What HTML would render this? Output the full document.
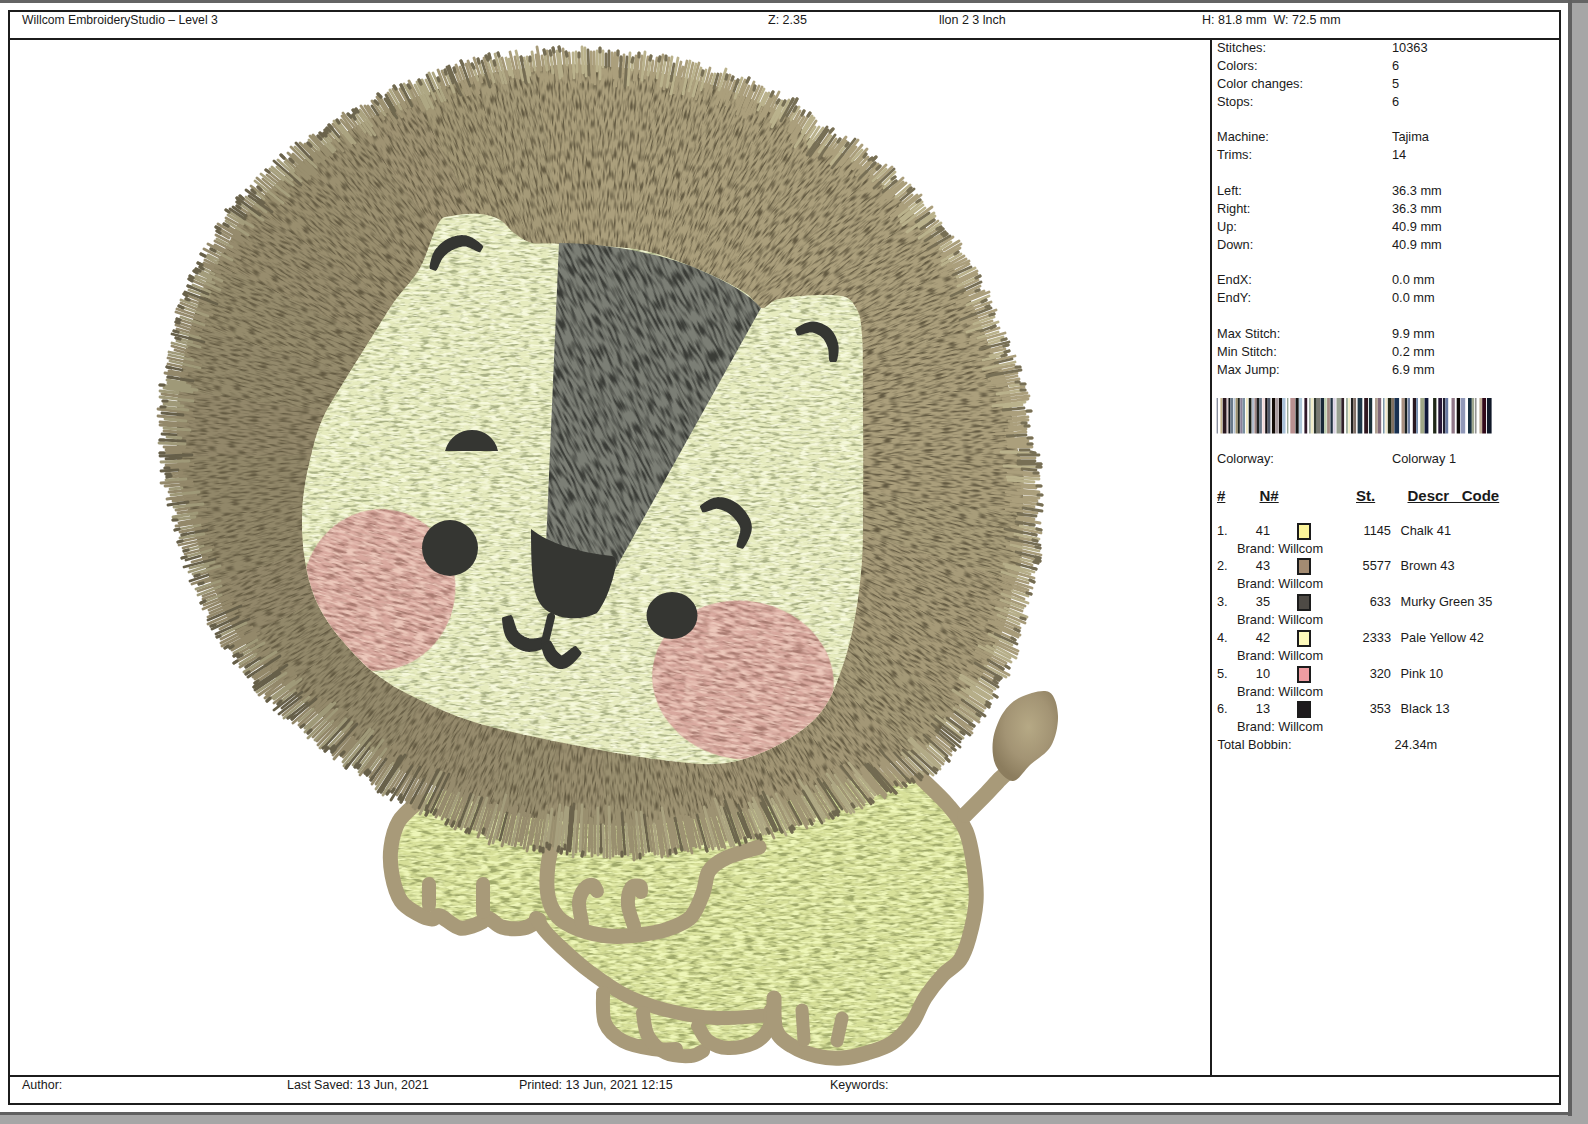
<!DOCTYPE html>
<html><head><meta charset="utf-8">
<style>
html,body{margin:0;padding:0;}
body{width:1588px;height:1124px;position:relative;overflow:hidden;background:#a6a6a6;font-family:"Liberation Sans",sans-serif;color:#1a1a1a;}
.t{position:absolute;white-space:pre;font-size:12.5px;line-height:1;}
.page{position:absolute;left:0;top:3px;width:1568px;height:1109px;background:#fff;}
.ln{position:absolute;background:#1c1c1c;}
.hd{position:absolute;font-weight:bold;font-size:15px;text-decoration:underline;white-space:pre;line-height:1;}
.sw{position:absolute;width:10px;height:13px;border:2px solid #1c1c1c;}
</style></head><body>
<div style="position:absolute;left:0;top:0;width:1588px;height:3px;background:#646464"></div>
<div class="page"></div>
<div style="position:absolute;left:1568px;top:0;width:4px;height:1116px;background:#606060"></div>
<div style="position:absolute;left:0;top:1112px;width:1572px;height:3px;background:#606060"></div>

<!-- frame -->
<div class="ln" style="left:9px;top:10px;width:1552px;height:2px"></div>
<div class="ln" style="left:9px;top:38px;width:1552px;height:2px"></div>
<div class="ln" style="left:9px;top:1075px;width:1552px;height:2px"></div>
<div class="ln" style="left:9px;top:1103px;width:1552px;height:2px"></div>
<div class="ln" style="left:8px;top:10px;width:2px;height:1095px"></div>
<div class="ln" style="left:1559px;top:10px;width:2px;height:1095px"></div>
<div class="ln" style="left:1210px;top:38px;width:2px;height:1039px"></div>

<!-- header -->
<div class="t" style="left:22px;top:13.8px;font-size:12.2px">Willcom EmbroideryStudio – Level 3</div>
<div class="t" style="left:768px;top:13.8px">Z: 2.35</div>
<div class="t" style="left:939px;top:13.8px">llon 2 3 lnch</div>
<div class="t" style="left:1202px;top:13.8px">H: 81.8 mm  W: 72.5 mm</div>

<!-- footer -->
<div class="t" style="left:22px;top:1078.8px">Author:</div>
<div class="t" style="left:287px;top:1078.8px">Last Saved: 13 Jun, 2021</div>
<div class="t" style="left:519px;top:1078.8px">Printed: 13 Jun, 2021 12:15</div>
<div class="t" style="left:830px;top:1078.8px">Keywords:</div>

<!-- right panel -->
<div class="t" style="left:1217.0px;top:41.9px;font-size:12.8px">Stitches:</div>
<div class="t" style="left:1392.0px;top:41.9px;font-size:12.8px">10363</div>
<div class="t" style="left:1217.0px;top:59.7px;font-size:12.8px">Colors:</div>
<div class="t" style="left:1392.0px;top:59.7px;font-size:12.8px">6</div>
<div class="t" style="left:1217.0px;top:77.6px;font-size:12.8px">Color changes:</div>
<div class="t" style="left:1392.0px;top:77.6px;font-size:12.8px">5</div>
<div class="t" style="left:1217.0px;top:95.5px;font-size:12.8px">Stops:</div>
<div class="t" style="left:1392.0px;top:95.5px;font-size:12.8px">6</div>
<div class="t" style="left:1217.0px;top:131.3px;font-size:12.8px">Machine:</div>
<div class="t" style="left:1392.0px;top:131.3px;font-size:12.8px">Tajima</div>
<div class="t" style="left:1217.0px;top:149.1px;font-size:12.8px">Trims:</div>
<div class="t" style="left:1392.0px;top:149.1px;font-size:12.8px">14</div>
<div class="t" style="left:1217.0px;top:184.9px;font-size:12.8px">Left:</div>
<div class="t" style="left:1392.0px;top:184.9px;font-size:12.8px">36.3 mm</div>
<div class="t" style="left:1217.0px;top:202.8px;font-size:12.8px">Right:</div>
<div class="t" style="left:1392.0px;top:202.8px;font-size:12.8px">36.3 mm</div>
<div class="t" style="left:1217.0px;top:220.7px;font-size:12.8px">Up:</div>
<div class="t" style="left:1392.0px;top:220.7px;font-size:12.8px">40.9 mm</div>
<div class="t" style="left:1217.0px;top:238.5px;font-size:12.8px">Down:</div>
<div class="t" style="left:1392.0px;top:238.5px;font-size:12.8px">40.9 mm</div>
<div class="t" style="left:1217.0px;top:274.3px;font-size:12.8px">EndX:</div>
<div class="t" style="left:1392.0px;top:274.3px;font-size:12.8px">0.0 mm</div>
<div class="t" style="left:1217.0px;top:292.2px;font-size:12.8px">EndY:</div>
<div class="t" style="left:1392.0px;top:292.2px;font-size:12.8px">0.0 mm</div>
<div class="t" style="left:1217.0px;top:327.9px;font-size:12.8px">Max Stitch:</div>
<div class="t" style="left:1392.0px;top:327.9px;font-size:12.8px">9.9 mm</div>
<div class="t" style="left:1217.0px;top:345.8px;font-size:12.8px">Min Stitch:</div>
<div class="t" style="left:1392.0px;top:345.8px;font-size:12.8px">0.2 mm</div>
<div class="t" style="left:1217.0px;top:363.7px;font-size:12.8px">Max Jump:</div>
<div class="t" style="left:1392.0px;top:363.7px;font-size:12.8px">6.9 mm</div>
<div class="t" style="left:1217.0px;top:453.1px;font-size:12.8px">Colorway:</div>
<div class="t" style="left:1392.0px;top:453.1px;font-size:12.8px">Colorway 1</div>
<div class="hd" style="left:1217px;top:488.2px">#</div>
<div class="hd" style="left:1259.5px;top:488.2px">N#</div>
<div class="hd" style="left:1356px;top:488.2px">St.</div>
<div class="hd" style="left:1407.5px;top:488.2px">Descr _Code</div>
<div class="t" style="left:1217.0px;top:524.6px;font-size:12.8px">1.</div>
<div class="t" style="right:318.0px;top:524.6px;font-size:12.8px">41</div>
<div class="t" style="right:197.0px;top:524.6px;font-size:12.8px">1145</div>
<div class="t" style="left:1400.5px;top:524.6px;font-size:12.8px">Chalk 41</div>
<div class="sw" style="left:1297px;top:522.5px;background:#fdf59b"></div>
<div class="t" style="left:1237.0px;top:542.5px;font-size:12.8px">Brand: Willcom</div>
<div class="t" style="left:1217.0px;top:560.4px;font-size:12.8px">2.</div>
<div class="t" style="right:318.0px;top:560.4px;font-size:12.8px">43</div>
<div class="t" style="right:197.0px;top:560.4px;font-size:12.8px">5577</div>
<div class="t" style="left:1400.5px;top:560.4px;font-size:12.8px">Brown 43</div>
<div class="sw" style="left:1297px;top:558.2px;background:#a38b72"></div>
<div class="t" style="left:1237.0px;top:578.3px;font-size:12.8px">Brand: Willcom</div>
<div class="t" style="left:1217.0px;top:596.1px;font-size:12.8px">3.</div>
<div class="t" style="right:318.0px;top:596.1px;font-size:12.8px">35</div>
<div class="t" style="right:197.0px;top:596.1px;font-size:12.8px">633</div>
<div class="t" style="left:1400.5px;top:596.1px;font-size:12.8px">Murky Green 35</div>
<div class="sw" style="left:1297px;top:594.0px;background:#4e4a45"></div>
<div class="t" style="left:1237.0px;top:614.0px;font-size:12.8px">Brand: Willcom</div>
<div class="t" style="left:1217.0px;top:631.9px;font-size:12.8px">4.</div>
<div class="t" style="right:318.0px;top:631.9px;font-size:12.8px">42</div>
<div class="t" style="right:197.0px;top:631.9px;font-size:12.8px">2333</div>
<div class="t" style="left:1400.5px;top:631.9px;font-size:12.8px">Pale Yellow 42</div>
<div class="sw" style="left:1297px;top:629.7px;background:#fdf9bb"></div>
<div class="t" style="left:1237.0px;top:649.8px;font-size:12.8px">Brand: Willcom</div>
<div class="t" style="left:1217.0px;top:667.7px;font-size:12.8px">5.</div>
<div class="t" style="right:318.0px;top:667.7px;font-size:12.8px">10</div>
<div class="t" style="right:197.0px;top:667.7px;font-size:12.8px">320</div>
<div class="t" style="left:1400.5px;top:667.7px;font-size:12.8px">Pink 10</div>
<div class="sw" style="left:1297px;top:665.5px;background:#ee9ca1"></div>
<div class="t" style="left:1237.0px;top:685.5px;font-size:12.8px">Brand: Willcom</div>
<div class="t" style="left:1217.0px;top:703.4px;font-size:12.8px">6.</div>
<div class="t" style="right:318.0px;top:703.4px;font-size:12.8px">13</div>
<div class="t" style="right:197.0px;top:703.4px;font-size:12.8px">353</div>
<div class="t" style="left:1400.5px;top:703.4px;font-size:12.8px">Black 13</div>
<div class="sw" style="left:1297px;top:701.3px;background:#1e1b1d"></div>
<div class="t" style="left:1237.0px;top:721.3px;font-size:12.8px">Brand: Willcom</div>
<div class="t" style="left:1217.5px;top:739.2px;font-size:12.8px">Total Bobbin:</div>
<div class="t" style="left:1394.5px;top:739.2px;font-size:12.8px">24.34m</div>
<svg style="position:absolute;left:0;top:0" width="1588" height="1124"><rect x="1216.6" y="398" width="1.4" height="35.5" fill="#8a90a0"/><rect x="1220.4" y="398" width="1.9" height="35.5" fill="#c8b890"/><rect x="1222.7" y="398" width="3.8" height="35.5" fill="#2a1820"/><rect x="1227.0" y="398" width="0.9" height="35.5" fill="#d8c0c0"/><rect x="1228.4" y="398" width="1.9" height="35.5" fill="#151518"/><rect x="1230.3" y="398" width="2.8" height="35.5" fill="#6a7a8a"/><rect x="1233.6" y="398" width="1.4" height="35.5" fill="#b8c8d8"/><rect x="1235.5" y="398" width="2.4" height="35.5" fill="#9a9070"/><rect x="1237.9" y="398" width="1.9" height="35.5" fill="#202520"/><rect x="1240.2" y="398" width="2.4" height="35.5" fill="#8a8098"/><rect x="1242.6" y="398" width="2.4" height="35.5" fill="#7a90a0"/><rect x="1245.9" y="398" width="1.9" height="35.5" fill="#f0e8c0"/><rect x="1248.7" y="398" width="2.8" height="35.5" fill="#1a2018"/><rect x="1252.0" y="398" width="1.9" height="35.5" fill="#b0b8c8"/><rect x="1254.4" y="398" width="2.4" height="35.5" fill="#9a8080"/><rect x="1256.7" y="398" width="2.4" height="35.5" fill="#202020"/><rect x="1259.1" y="398" width="2.8" height="35.5" fill="#6a7888"/><rect x="1262.4" y="398" width="2.4" height="35.5" fill="#f0d8d8"/><rect x="1265.2" y="398" width="2.4" height="35.5" fill="#150f12"/><rect x="1267.6" y="398" width="2.8" height="35.5" fill="#505868"/><rect x="1271.9" y="398" width="3.3" height="35.5" fill="#120c08"/><rect x="1275.2" y="398" width="3.3" height="35.5" fill="#a89ca0"/><rect x="1278.9" y="398" width="3.3" height="35.5" fill="#100808"/><rect x="1282.2" y="398" width="3.3" height="35.5" fill="#a8c0d8"/><rect x="1287.0" y="398" width="1.4" height="35.5" fill="#98a898"/><rect x="1290.3" y="398" width="4.7" height="35.5" fill="#b89090"/><rect x="1295.5" y="398" width="3.3" height="35.5" fill="#151515"/><rect x="1298.8" y="398" width="3.3" height="35.5" fill="#b0c8d8"/><rect x="1304.4" y="398" width="2.8" height="35.5" fill="#301828"/><rect x="1309.2" y="398" width="1.4" height="35.5" fill="#90a090"/><rect x="1311.0" y="398" width="2.4" height="35.5" fill="#f0ecc8"/><rect x="1313.9" y="398" width="2.8" height="35.5" fill="#303830"/><rect x="1316.7" y="398" width="3.3" height="35.5" fill="#787870"/><rect x="1320.5" y="398" width="3.8" height="35.5" fill="#182838"/><rect x="1324.3" y="398" width="2.4" height="35.5" fill="#c0d0b0"/><rect x="1327.1" y="398" width="2.8" height="35.5" fill="#a08880"/><rect x="1330.4" y="398" width="2.4" height="35.5" fill="#203040"/><rect x="1333.2" y="398" width="2.4" height="35.5" fill="#d8d0e0"/><rect x="1336.5" y="398" width="4.7" height="35.5" fill="#98a090"/><rect x="1341.3" y="398" width="2.8" height="35.5" fill="#302028"/><rect x="1346.0" y="398" width="1.9" height="35.5" fill="#a0b0a0"/><rect x="1348.3" y="398" width="1.6" height="35.5" fill="#f0ecc0"/><rect x="1350.9" y="398" width="2.4" height="35.5" fill="#202020"/><rect x="1353.3" y="398" width="2.8" height="35.5" fill="#807068"/><rect x="1357.6" y="398" width="4.7" height="35.5" fill="#203848"/><rect x="1364.2" y="398" width="3.8" height="35.5" fill="#301820"/><rect x="1368.9" y="398" width="3.3" height="35.5" fill="#183038"/><rect x="1375.0" y="398" width="2.8" height="35.5" fill="#b0a090"/><rect x="1377.9" y="398" width="3.3" height="35.5" fill="#806878"/><rect x="1383.1" y="398" width="1.4" height="35.5" fill="#7090a0"/><rect x="1385.4" y="398" width="1.9" height="35.5" fill="#f0e8c8"/><rect x="1387.8" y="398" width="3.8" height="35.5" fill="#202818"/><rect x="1391.5" y="398" width="2.8" height="35.5" fill="#807060"/><rect x="1394.4" y="398" width="4.7" height="35.5" fill="#183050"/><rect x="1401.5" y="398" width="3.3" height="35.5" fill="#a89080"/><rect x="1404.8" y="398" width="2.4" height="35.5" fill="#182020"/><rect x="1407.6" y="398" width="2.4" height="35.5" fill="#7080a0"/><rect x="1412.8" y="398" width="3.3" height="35.5" fill="#281820"/><rect x="1416.1" y="398" width="1.9" height="35.5" fill="#7890b0"/><rect x="1420.3" y="398" width="4.2" height="35.5" fill="#a0a888"/><rect x="1424.6" y="398" width="3.8" height="35.5" fill="#101838"/><rect x="1433.1" y="398" width="3.3" height="35.5" fill="#202818"/><rect x="1438.3" y="398" width="3.8" height="35.5" fill="#281838"/><rect x="1443.0" y="398" width="2.4" height="35.5" fill="#202030"/><rect x="1445.4" y="398" width="2.8" height="35.5" fill="#6878a0"/><rect x="1451.5" y="398" width="3.3" height="35.5" fill="#907888"/><rect x="1456.7" y="398" width="3.3" height="35.5" fill="#100c08"/><rect x="1460.5" y="398" width="4.7" height="35.5" fill="#9098b8"/><rect x="1468.0" y="398" width="3.8" height="35.5" fill="#183040"/><rect x="1471.8" y="398" width="2.4" height="35.5" fill="#a0a890"/><rect x="1475.1" y="398" width="1.4" height="35.5" fill="#888888"/><rect x="1479.4" y="398" width="2.8" height="35.5" fill="#c0b098"/><rect x="1482.2" y="398" width="3.8" height="35.5" fill="#300818"/><rect x="1486.9" y="398" width="4.7" height="35.5" fill="#101828"/></svg>

<!-- lion -->
<svg id="lion" style="position:absolute;left:0;top:0" width="1588" height="1124" viewBox="0 0 1588 1124">
<defs><filter id="tf" x="0" y="0" width="1" height="1" color-interpolation-filters="sRGB">
<feTurbulence type="fractalNoise" baseFrequency="0.1 0.38" numOctaves="2" seed="5" result="n"/>
<feColorMatrix in="n" type="matrix" values="0 0 0 0 0.667 0 0 0 0 0.698 0 0 0 0 0.525 4.0 0 0 0 -1.85" result="d"/>
<feComposite in="d" in2="SourceGraphic" operator="in" result="d2"/>
<feColorMatrix in="n" type="matrix" values="0 0 0 0 0.965 0 0 0 0 0.976 0 0 0 0 0.863 0 4.0 0 0 -1.85" result="l"/>
<feComposite in="l" in2="SourceGraphic" operator="in" result="l2"/>
<feMerge><feMergeNode in="SourceGraphic"/><feMergeNode in="d2"/><feMergeNode in="l2"/></feMerge>
</filter><filter id="tb" x="0" y="0" width="1" height="1" color-interpolation-filters="sRGB">
<feTurbulence type="fractalNoise" baseFrequency="0.09 0.36" numOctaves="2" seed="9" result="n"/>
<feColorMatrix in="n" type="matrix" values="0 0 0 0 0.624 0 0 0 0 0.663 0 0 0 0 0.416 4.0 0 0 0 -1.75" result="d"/>
<feComposite in="d" in2="SourceGraphic" operator="in" result="d2"/>
<feColorMatrix in="n" type="matrix" values="0 0 0 0 0.933 0 0 0 0 0.965 0 0 0 0 0.722 0 4.0 0 0 -1.75" result="l"/>
<feComposite in="l" in2="SourceGraphic" operator="in" result="l2"/>
<feMerge><feMergeNode in="SourceGraphic"/><feMergeNode in="d2"/><feMergeNode in="l2"/></feMerge>
</filter><filter id="ts" x="0" y="0" width="1" height="1" color-interpolation-filters="sRGB">
<feTurbulence type="fractalNoise" baseFrequency="0.4 0.07" numOctaves="4.0" seed="11" result="n"/>
<feColorMatrix in="n" type="matrix" values="0 0 0 0 0.227 0 0 0 0 0.235 0 0 0 0 0.216 4.0 0 0 0 -1.75" result="d"/>
<feComposite in="d" in2="SourceGraphic" operator="in" result="d2"/>
<feColorMatrix in="n" type="matrix" values="0 0 0 0 0.604 0 0 0 0 0.616 0 0 0 0 0.565 0 -1.9 0 0 -1.75" result="l"/>
<feComposite in="l" in2="SourceGraphic" operator="in" result="l2"/>
<feMerge><feMergeNode in="SourceGraphic"/><feMergeNode in="d2"/><feMergeNode in="l2"/></feMerge>
</filter><filter id="tc" x="0" y="0" width="1" height="1" color-interpolation-filters="sRGB">
<feTurbulence type="fractalNoise" baseFrequency="0.08 0.38" numOctaves="2" seed="13" result="n"/>
<feColorMatrix in="n" type="matrix" values="0 0 0 0 0.659 0 0 0 0 0.478 0 0 0 0 0.439 4.0 0 0 0 -1.7" result="d"/>
<feComposite in="d" in2="SourceGraphic" operator="in" result="d2"/>
<feColorMatrix in="n" type="matrix" values="0 0 0 0 0.925 0 0 0 0 0.784 0 0 0 0 0.733 0 4.0 0 0 -1.7" result="l"/>
<feComposite in="l" in2="SourceGraphic" operator="in" result="l2"/>
<feMerge><feMergeNode in="SourceGraphic"/><feMergeNode in="d2"/><feMergeNode in="l2"/></feMerge>
</filter><filter id="tm" x="0" y="0" width="1" height="1" color-interpolation-filters="sRGB">
<feTurbulence type="fractalNoise" baseFrequency="0.55 0.1" numOctaves="4.2" seed="21" result="n"/>
<feColorMatrix in="n" type="matrix" values="0 0 0 0 0.388 0 0 0 0 0.353 0 0 0 0 0.259 4.2 0 0 0 -1.95" result="d"/>
<feComposite in="d" in2="SourceGraphic" operator="in" result="d2"/>
<feColorMatrix in="n" type="matrix" values="0 0 0 0 0.824 0 0 0 0 0.784 0 0 0 0 0.635 0 -1.75 0 0 -1.95" result="l"/>
<feComposite in="l" in2="SourceGraphic" operator="in" result="l2"/>
<feMerge><feMergeNode in="SourceGraphic"/><feMergeNode in="d2"/><feMergeNode in="l2"/></feMerge>
</filter><clipPath id="sec0"><path d="M600,452L1300,444L1290,570Z"/></clipPath><clipPath id="sec1"><path d="M600,452L1293,553L1263,676Z"/></clipPath><clipPath id="sec2"><path d="M600,452L1268,660L1220,777Z"/></clipPath><clipPath id="sec3"><path d="M600,452L1227,762L1161,870Z"/></clipPath><clipPath id="sec4"><path d="M600,452L1171,857L1089,953Z"/></clipPath><clipPath id="sec5"><path d="M600,452L1101,941L1005,1023Z"/></clipPath><clipPath id="sec6"><path d="M600,452L1018,1013L910,1079Z"/></clipPath><clipPath id="sec7"><path d="M600,452L925,1072L808,1120Z"/></clipPath><clipPath id="sec8"><path d="M600,452L824,1115L701,1145Z"/></clipPath><clipPath id="sec9"><path d="M600,452L718,1142L592,1152Z"/></clipPath><clipPath id="sec10"><path d="M600,452L608,1152L482,1142Z"/></clipPath><clipPath id="sec11"><path d="M600,452L499,1145L376,1115Z"/></clipPath><clipPath id="sec12"><path d="M600,452L392,1120L275,1072Z"/></clipPath><clipPath id="sec13"><path d="M600,452L290,1079L182,1013Z"/></clipPath><clipPath id="sec14"><path d="M600,452L195,1023L99,941Z"/></clipPath><clipPath id="sec15"><path d="M600,452L111,953L29,857Z"/></clipPath><clipPath id="sec16"><path d="M600,452L39,870L-27,762Z"/></clipPath><clipPath id="sec17"><path d="M600,452L-20,777L-68,660Z"/></clipPath><clipPath id="sec18"><path d="M600,452L-63,676L-93,553Z"/></clipPath><clipPath id="sec19"><path d="M600,452L-90,570L-100,444Z"/></clipPath><clipPath id="sec20"><path d="M600,452L-100,460L-90,334Z"/></clipPath><clipPath id="sec21"><path d="M600,452L-93,351L-63,228Z"/></clipPath><clipPath id="sec22"><path d="M600,452L-68,244L-20,127Z"/></clipPath><clipPath id="sec23"><path d="M600,452L-27,142L39,34Z"/></clipPath><clipPath id="sec24"><path d="M600,452L29,47L111,-49Z"/></clipPath><clipPath id="sec25"><path d="M600,452L99,-37L195,-119Z"/></clipPath><clipPath id="sec26"><path d="M600,452L182,-109L290,-175Z"/></clipPath><clipPath id="sec27"><path d="M600,452L275,-168L392,-216Z"/></clipPath><clipPath id="sec28"><path d="M600,452L376,-211L499,-241Z"/></clipPath><clipPath id="sec29"><path d="M600,452L482,-238L608,-248Z"/></clipPath><clipPath id="sec30"><path d="M600,452L592,-248L718,-238Z"/></clipPath><clipPath id="sec31"><path d="M600,452L701,-241L824,-211Z"/></clipPath><clipPath id="sec32"><path d="M600,452L808,-216L925,-168Z"/></clipPath><clipPath id="sec33"><path d="M600,452L910,-175L1018,-109Z"/></clipPath><clipPath id="sec34"><path d="M600,452L1005,-119L1101,-37Z"/></clipPath><clipPath id="sec35"><path d="M600,452L1089,-49L1171,47Z"/></clipPath><clipPath id="sec36"><path d="M600,452L1161,34L1227,142Z"/></clipPath><clipPath id="sec37"><path d="M600,452L1220,127L1268,244Z"/></clipPath><clipPath id="sec38"><path d="M600,452L1263,228L1293,351Z"/></clipPath><clipPath id="sec39"><path d="M600,452L1290,334L1300,460Z"/></clipPath><clipPath id="cm"><path d="M549.1,65.9 C565.3,64.5 569.4,64.2 585.6,65.0 C601.8,65.8 624.2,67.3 646.1,70.9 C668.0,74.4 693.6,78.7 717.1,86.2 C740.6,93.8 771.6,107.1 787.2,116.0 C802.9,124.8 801.3,132.7 811.0,139.3 C820.8,145.8 834.5,148.5 845.8,155.3 C857.0,162.1 866.7,169.8 878.5,180.2 C890.4,190.5 905.9,204.9 917.1,217.5 C928.4,230.1 937.4,242.6 946.1,255.9 C954.8,269.2 962.3,282.9 969.2,297.2 C976.2,311.4 981.1,326.5 987.6,341.4 C994.1,356.3 1003.8,370.8 1008.2,386.5 C1012.6,402.2 1011.5,421.8 1014.0,435.6 C1016.5,449.4 1021.5,459.7 1023.0,469.3 C1024.5,479.0 1023.3,478.5 1023.1,493.4 C1022.8,508.4 1023.2,543.3 1021.5,559.1 C1019.8,574.8 1015.0,579.1 1012.8,588.0 C1010.6,596.9 1011.3,601.9 1008.1,612.7 C1004.8,623.6 999.6,639.8 993.4,653.0 C987.3,666.2 979.4,680.3 971.3,691.9 C963.2,703.6 952.8,713.3 944.9,723.0 C937.0,732.7 932.7,743.8 923.8,750.3 C914.9,756.9 905.8,756.6 891.6,762.4 C877.3,768.1 858.8,777.6 838.4,784.8 C818.0,792.1 792.0,800.4 769.1,805.9 C746.1,811.5 724.7,814.9 700.8,818.2 C676.9,821.5 651.9,825.5 625.8,825.7 C599.8,825.8 565.9,821.8 544.6,819.3 C523.4,816.9 515.4,815.8 498.3,810.8 C481.2,805.7 458.4,795.5 442.3,788.8 C426.1,782.1 418.2,780.1 401.6,770.5 C385.1,761.0 362.3,745.5 342.9,731.6 C323.6,717.6 302.8,702.7 285.6,686.8 C268.4,671.0 250.5,650.6 239.6,636.5 C228.8,622.3 226.4,614.4 220.3,601.9 C214.3,589.5 208.2,575.3 203.4,561.7 C198.7,548.1 195.9,534.2 191.8,520.4 C187.7,506.6 181.4,496.2 179.0,479.0 C176.5,461.8 176.7,434.5 176.9,417.3 C177.2,400.1 178.4,391.0 180.7,375.9 C183.1,360.8 186.8,343.1 191.3,326.7 C195.8,310.3 201.5,291.2 207.6,277.5 C213.7,263.9 222.3,254.4 228.0,244.8 C233.6,235.2 233.2,230.0 241.4,219.7 C249.6,209.4 264.1,195.2 277.3,183.2 C290.5,171.3 306.6,157.8 320.8,147.8 C335.0,137.7 349.0,130.5 362.4,123.0 C375.7,115.5 384.4,109.9 400.9,102.9 C417.5,95.9 447.0,85.9 461.6,81.0 C476.2,76.1 473.9,75.9 488.5,73.3 C503.1,70.8 532.9,67.3 549.1,65.9Z"/></clipPath><radialGradient id="gb" cx="0.55" cy="0.4" r="0.6"><stop offset="0" stop-color="#b6a985"/><stop offset="0.6" stop-color="#a39474"/><stop offset="1" stop-color="#8c7d5e"/></radialGradient><clipPath id="fc"><path d="M438.0,224.0 C443.3,215.3 445.0,217.7 452.0,216.0 C459.0,214.3 472.0,213.3 480.0,214.0 C488.0,214.7 494.3,216.8 500.0,220.0 C505.7,223.2 508.7,229.2 514.0,233.0 C519.3,236.8 524.5,241.2 532.0,243.0 C539.5,244.8 541.0,242.8 559.0,244.0 C577.0,245.2 616.5,245.7 640.0,250.0 C663.5,254.3 682.7,263.0 700.0,270.0 C717.3,277.0 733.8,285.7 744.0,292.0 C754.2,298.3 755.7,306.7 761.0,308.0 C766.3,309.3 769.5,302.0 776.0,300.0 C782.5,298.0 789.2,296.7 800.0,296.0 C810.8,295.3 831.7,294.0 841.0,296.0 C850.3,298.0 852.5,301.5 856.0,308.0 C859.5,314.5 860.8,316.3 862.0,335.0 C863.2,353.7 862.8,392.5 863.0,420.0 C863.2,447.5 863.2,476.7 863.0,500.0 C862.8,523.3 863.3,540.5 862.0,560.0 C860.7,579.5 858.3,599.0 855.0,617.0 C851.7,635.0 847.7,652.2 842.0,668.0 C836.3,683.8 831.3,699.3 821.0,712.0 C810.7,724.7 795.8,735.5 780.0,744.0 C764.2,752.5 745.5,760.3 726.0,763.0 C706.5,765.7 689.2,763.2 663.0,760.0 C636.8,756.8 600.5,750.3 569.0,744.0 C537.5,737.7 500.5,730.2 474.0,722.0 C447.5,713.8 425.7,702.5 410.0,695.0 C394.3,687.5 388.5,683.0 380.0,677.0 C371.5,671.0 367.3,667.7 359.0,659.0 C350.7,650.3 337.8,636.5 330.0,625.0 C322.2,613.5 316.5,603.3 312.0,590.0 C307.5,576.7 304.5,560.0 303.0,545.0 C301.5,530.0 301.8,514.2 303.0,500.0 C304.2,485.8 306.8,473.3 310.0,460.0 C313.2,446.7 316.2,433.3 322.0,420.0 C327.8,406.7 337.0,393.3 345.0,380.0 C353.0,366.7 361.8,353.0 370.0,340.0 C378.2,327.0 385.7,314.0 394.0,302.0 C402.3,290.0 412.7,281.0 420.0,268.0 C427.3,255.0 432.7,232.7 438.0,224.0Z"/></clipPath><clipPath id="sp"><path d="M559,243 C600,243 660,252 700,270 C730,283 750,295 761,308 L612,575 L544,565 L546,545 Z"/></clipPath></defs>
<path d="M414.0,800.0 C405.5,805.2 402.8,813.2 399.0,821.0 C395.2,828.8 392.2,838.0 391.0,847.0 C389.8,856.0 390.3,866.0 392.0,875.0 C393.7,884.0 396.7,894.5 401.0,901.0 C405.3,907.5 412.2,910.7 418.0,914.0 C423.8,917.3 429.0,918.8 436.0,921.0 C443.0,923.2 452.2,927.2 460.0,927.0 C467.8,926.8 475.8,920.3 483.0,920.0 C490.2,919.7 496.2,923.8 503.0,925.0 C509.8,926.2 518.0,927.7 524.0,927.0 C530.0,926.3 532.7,917.5 539.0,921.0 C545.3,924.5 553.5,939.5 562.0,948.0 C570.5,956.5 583.2,964.5 590.0,972.0 C596.8,979.5 600.5,984.5 603.0,993.0 C605.5,1001.5 601.7,1015.0 605.0,1023.0 C608.3,1031.0 615.0,1036.7 623.0,1041.0 C631.0,1045.3 644.7,1047.5 653.0,1049.0 C661.3,1050.5 666.7,1048.8 673.0,1050.0 C679.3,1051.2 686.0,1055.8 691.0,1056.0 C696.0,1056.2 696.8,1052.3 703.0,1051.0 C709.2,1049.7 719.5,1049.3 728.0,1048.0 C736.5,1046.7 747.2,1046.3 754.0,1043.0 C760.8,1039.7 765.3,1030.2 769.0,1028.0 C772.7,1025.8 772.2,1027.0 776.0,1030.0 C779.8,1033.0 785.2,1041.7 792.0,1046.0 C798.8,1050.3 808.7,1054.0 817.0,1056.0 C825.3,1058.0 833.7,1058.5 842.0,1058.0 C850.3,1057.5 858.7,1055.5 867.0,1053.0 C875.3,1050.5 884.5,1048.0 892.0,1043.0 C899.5,1038.0 906.5,1030.5 912.0,1023.0 C917.5,1015.5 919.8,1006.0 925.0,998.0 C930.2,990.0 937.2,981.3 943.0,975.0 C948.8,968.7 955.7,966.2 960.0,960.0 C964.3,953.8 966.3,947.7 969.0,938.0 C971.7,928.3 975.2,913.8 976.0,902.0 C976.8,890.2 975.7,878.8 974.0,867.0 C972.3,855.2 970.3,841.3 966.0,831.0 C961.7,820.7 955.5,813.8 948.0,805.0 C940.5,796.2 945.7,783.8 921.0,778.0 C896.3,772.2 853.5,769.7 800.0,770.0 C746.5,770.3 658.3,776.7 600.0,780.0 C541.7,783.3 481.0,786.7 450.0,790.0 C419.0,793.3 422.5,794.8 414.0,800.0Z" fill="#d6df98" filter="url(#tb)"/>
<g><path d="M418.0,802.0 C414.8,805.2 403.5,813.5 399.0,821.0 C394.5,828.5 392.2,838.0 391.0,847.0 C389.8,856.0 390.3,866.0 392.0,875.0 C393.7,884.0 396.7,894.5 401.0,901.0 C405.3,907.5 412.8,911.0 418.0,914.0 C423.2,917.0 428.3,918.7 432.0,919.0 C435.7,919.3 435.3,914.5 440.0,916.0 C444.7,917.5 453.3,926.8 460.0,928.0 C466.7,929.2 475.3,924.7 480.0,923.0 C484.7,921.3 484.3,917.3 488.0,918.0 C491.7,918.7 496.0,925.3 502.0,927.0 C508.0,928.7 517.8,929.2 524.0,928.0 C530.2,926.8 536.5,921.3 539.0,920.0" fill="none" stroke="#a89a79" stroke-width="15" stroke-linecap="round" stroke-linejoin="round"/><path d="M429.0,884.0 C429.0,887.5 429.0,901.5 429.0,905.0" fill="none" stroke="#a89a79" stroke-width="14" stroke-linecap="round" stroke-linejoin="round"/><path d="M483.0,884.0 C483.0,888.7 483.0,907.3 483.0,912.0" fill="none" stroke="#a89a79" stroke-width="14" stroke-linecap="round" stroke-linejoin="round"/><path d="M536.0,918.0 C537.7,920.3 541.7,927.0 546.0,932.0 C550.3,937.0 554.7,941.3 562.0,948.0 C569.3,954.7 579.5,964.2 590.0,972.0 C600.5,979.8 612.3,988.7 625.0,995.0 C637.7,1001.3 650.8,1006.2 666.0,1010.0 C681.2,1013.8 698.5,1017.2 716.0,1018.0 C733.5,1018.8 761.8,1015.5 771.0,1015.0" fill="none" stroke="#a89a79" stroke-width="14" stroke-linecap="round" stroke-linejoin="round"/><path d="M556.0,828.0 C554.7,834.2 549.3,853.7 548.0,865.0 C546.7,876.3 546.3,887.3 548.0,896.0 C549.7,904.7 553.0,911.5 558.0,917.0 C563.0,922.5 569.7,925.8 578.0,929.0 C586.3,932.2 598.0,935.0 608.0,936.0 C618.0,937.0 628.0,936.2 638.0,935.0 C648.0,933.8 659.2,932.0 668.0,929.0 C676.8,926.0 685.2,923.0 691.0,917.0 C696.8,911.0 700.0,900.7 703.0,893.0 C706.0,885.3 705.2,876.8 709.0,871.0 C712.8,865.2 717.7,862.0 726.0,858.0 C734.3,854.0 753.5,848.8 759.0,847.0" fill="none" stroke="#a89a79" stroke-width="15" stroke-linecap="round" stroke-linejoin="round"/><path d="M582.0,923.0 C581.5,919.5 578.5,907.8 579.0,902.0 C579.5,896.2 582.7,890.8 585.0,888.0 C587.3,885.2 591.0,884.5 593.0,885.0 C595.0,885.5 596.3,890.0 597.0,891.0" fill="none" stroke="#a89a79" stroke-width="14" stroke-linecap="round" stroke-linejoin="round"/><path d="M634.0,926.0 C633.0,922.5 628.5,911.3 628.0,905.0 C627.5,898.7 629.0,891.2 631.0,888.0 C633.0,884.8 638.3,885.3 640.0,886.0 C641.7,886.7 640.8,891.0 641.0,892.0" fill="none" stroke="#a89a79" stroke-width="14" stroke-linecap="round" stroke-linejoin="round"/><path d="M603.0,993.0 C603.3,998.0 601.7,1015.0 605.0,1023.0 C608.3,1031.0 615.0,1036.7 623.0,1041.0 C631.0,1045.3 644.2,1047.7 653.0,1049.0 C661.8,1050.3 672.2,1049.0 676.0,1049.0" fill="none" stroke="#a89a79" stroke-width="14" stroke-linecap="round" stroke-linejoin="round"/><path d="M643.0,1013.0 C643.8,1016.8 644.2,1029.3 648.0,1036.0 C651.8,1042.7 658.8,1049.7 666.0,1053.0 C673.2,1056.3 684.8,1056.3 691.0,1056.0 C697.2,1055.7 701.0,1051.8 703.0,1051.0" fill="none" stroke="#a89a79" stroke-width="14" stroke-linecap="round" stroke-linejoin="round"/><path d="M698.0,1026.0 C699.7,1028.5 703.0,1037.3 708.0,1041.0 C713.0,1044.7 720.3,1047.7 728.0,1048.0 C735.7,1048.3 747.2,1046.3 754.0,1043.0 C760.8,1039.7 766.2,1033.5 769.0,1028.0 C771.8,1022.5 770.7,1013.0 771.0,1010.0" fill="none" stroke="#a89a79" stroke-width="14" stroke-linecap="round" stroke-linejoin="round"/><path d="M774.0,998.0 C774.3,1003.3 773.0,1022.0 776.0,1030.0 C779.0,1038.0 785.2,1041.7 792.0,1046.0 C798.8,1050.3 808.7,1054.0 817.0,1056.0 C825.3,1058.0 833.7,1058.5 842.0,1058.0 C850.3,1057.5 858.7,1055.5 867.0,1053.0 C875.3,1050.5 884.5,1048.0 892.0,1043.0 C899.5,1038.0 906.5,1030.5 912.0,1023.0 C917.5,1015.5 919.8,1006.0 925.0,998.0 C930.2,990.0 937.2,981.3 943.0,975.0 C948.8,968.7 955.7,966.2 960.0,960.0 C964.3,953.8 966.3,947.7 969.0,938.0 C971.7,928.3 975.2,913.8 976.0,902.0 C976.8,890.2 975.7,878.8 974.0,867.0 C972.3,855.2 970.3,841.3 966.0,831.0 C961.7,820.7 955.5,813.8 948.0,805.0 C940.5,796.2 925.5,782.5 921.0,778.0" fill="none" stroke="#a89a79" stroke-width="15" stroke-linecap="round" stroke-linejoin="round"/><path d="M802.0,1010.0 C802.3,1015.0 803.7,1035.0 804.0,1040.0" fill="none" stroke="#a89a79" stroke-width="13" stroke-linecap="round" stroke-linejoin="round"/><path d="M842.0,1018.0 C841.2,1021.8 837.8,1037.2 837.0,1041.0" fill="none" stroke="#a89a79" stroke-width="13" stroke-linecap="round" stroke-linejoin="round"/><path d="M965.0,815.0 C968.3,811.7 979.2,801.0 985.0,795.0 C990.8,789.0 996.2,782.8 1000.0,779.0 C1003.8,775.2 1006.7,773.2 1008.0,772.0" fill="none" stroke="#a89a79" stroke-width="16" stroke-linecap="round" stroke-linejoin="round"/><path d="M1049.0,692.0 C1055.2,695.2 1057.7,707.0 1058.0,716.0 C1058.3,725.0 1055.7,737.8 1051.0,746.0 C1046.3,754.2 1036.3,759.2 1030.0,765.0 C1023.7,770.8 1018.7,780.8 1013.0,781.0 C1007.3,781.2 999.3,772.8 996.0,766.0 C992.7,759.2 991.8,748.8 993.0,740.0 C994.2,731.2 998.3,720.2 1003.0,713.0 C1007.7,705.8 1013.3,700.5 1021.0,697.0 C1028.7,693.5 1042.8,688.8 1049.0,692.0Z" fill="url(#gb)"/></g>
<path d="M549.1,65.9 C565.3,64.5 569.4,64.2 585.6,65.0 C601.8,65.8 624.2,67.3 646.1,70.9 C668.0,74.4 693.6,78.7 717.1,86.2 C740.6,93.8 771.6,107.1 787.2,116.0 C802.9,124.8 801.3,132.7 811.0,139.3 C820.8,145.8 834.5,148.5 845.8,155.3 C857.0,162.1 866.7,169.8 878.5,180.2 C890.4,190.5 905.9,204.9 917.1,217.5 C928.4,230.1 937.4,242.6 946.1,255.9 C954.8,269.2 962.3,282.9 969.2,297.2 C976.2,311.4 981.1,326.5 987.6,341.4 C994.1,356.3 1003.8,370.8 1008.2,386.5 C1012.6,402.2 1011.5,421.8 1014.0,435.6 C1016.5,449.4 1021.5,459.7 1023.0,469.3 C1024.5,479.0 1023.3,478.5 1023.1,493.4 C1022.8,508.4 1023.2,543.3 1021.5,559.1 C1019.8,574.8 1015.0,579.1 1012.8,588.0 C1010.6,596.9 1011.3,601.9 1008.1,612.7 C1004.8,623.6 999.6,639.8 993.4,653.0 C987.3,666.2 979.4,680.3 971.3,691.9 C963.2,703.6 952.8,713.3 944.9,723.0 C937.0,732.7 932.7,743.8 923.8,750.3 C914.9,756.9 905.8,756.6 891.6,762.4 C877.3,768.1 858.8,777.6 838.4,784.8 C818.0,792.1 792.0,800.4 769.1,805.9 C746.1,811.5 724.7,814.9 700.8,818.2 C676.9,821.5 651.9,825.5 625.8,825.7 C599.8,825.8 565.9,821.8 544.6,819.3 C523.4,816.9 515.4,815.8 498.3,810.8 C481.2,805.7 458.4,795.5 442.3,788.8 C426.1,782.1 418.2,780.1 401.6,770.5 C385.1,761.0 362.3,745.5 342.9,731.6 C323.6,717.6 302.8,702.7 285.6,686.8 C268.4,671.0 250.5,650.6 239.6,636.5 C228.8,622.3 226.4,614.4 220.3,601.9 C214.3,589.5 208.2,575.3 203.4,561.7 C198.7,548.1 195.9,534.2 191.8,520.4 C187.7,506.6 181.4,496.2 179.0,479.0 C176.5,461.8 176.7,434.5 176.9,417.3 C177.2,400.1 178.4,391.0 180.7,375.9 C183.1,360.8 186.8,343.1 191.3,326.7 C195.8,310.3 201.5,291.2 207.6,277.5 C213.7,263.9 222.3,254.4 228.0,244.8 C233.6,235.2 233.2,230.0 241.4,219.7 C249.6,209.4 264.1,195.2 277.3,183.2 C290.5,171.3 306.6,157.8 320.8,147.8 C335.0,137.7 349.0,130.5 362.4,123.0 C375.7,115.5 384.4,109.9 400.9,102.9 C417.5,95.9 447.0,85.9 461.6,81.0 C476.2,76.1 473.9,75.9 488.5,73.3 C503.1,70.8 532.9,67.3 549.1,65.9Z" fill="#ab9f7c"/>
<g clip-path="url(#cm)"><g clip-path="url(#sec0)"><rect x="536" y="-38" width="129" height="500" fill="#aa9e7b" transform="rotate(94.5 600 452)" filter="url(#tm)"/></g><g clip-path="url(#sec1)"><rect x="536" y="-38" width="129" height="500" fill="#a89d7a" transform="rotate(103.5 600 452)" filter="url(#tm)"/></g><g clip-path="url(#sec2)"><rect x="536" y="-38" width="129" height="500" fill="#a79b79" transform="rotate(112.5 600 452)" filter="url(#tm)"/></g><g clip-path="url(#sec3)"><rect x="536" y="-38" width="129" height="500" fill="#a69a78" transform="rotate(121.5 600 452)" filter="url(#tm)"/></g><g clip-path="url(#sec4)"><rect x="536" y="-38" width="129" height="500" fill="#a49977" transform="rotate(130.5 600 452)" filter="url(#tm)"/></g><g clip-path="url(#sec5)"><rect x="536" y="-38" width="129" height="500" fill="#a39776" transform="rotate(139.5 600 452)" filter="url(#tm)"/></g><g clip-path="url(#sec6)"><rect x="536" y="-38" width="129" height="500" fill="#a19574" transform="rotate(148.5 600 452)" filter="url(#tm)"/></g><g clip-path="url(#sec7)"><rect x="536" y="-38" width="129" height="500" fill="#9f9373" transform="rotate(157.5 600 452)" filter="url(#tm)"/></g><g clip-path="url(#sec8)"><rect x="536" y="-38" width="129" height="500" fill="#9c9171" transform="rotate(166.5 600 452)" filter="url(#tm)"/></g><g clip-path="url(#sec9)"><rect x="536" y="-38" width="129" height="500" fill="#9a9070" transform="rotate(175.5 600 452)" filter="url(#tm)"/></g><g clip-path="url(#sec10)"><rect x="536" y="-38" width="129" height="500" fill="#998e6f" transform="rotate(184.5 600 452)" filter="url(#tm)"/></g><g clip-path="url(#sec11)"><rect x="536" y="-38" width="129" height="500" fill="#978d6e" transform="rotate(193.5 600 452)" filter="url(#tm)"/></g><g clip-path="url(#sec12)"><rect x="536" y="-38" width="129" height="500" fill="#968b6d" transform="rotate(202.5 600 452)" filter="url(#tm)"/></g><g clip-path="url(#sec13)"><rect x="536" y="-38" width="129" height="500" fill="#958a6c" transform="rotate(211.5 600 452)" filter="url(#tm)"/></g><g clip-path="url(#sec14)"><rect x="536" y="-38" width="129" height="500" fill="#93896b" transform="rotate(220.5 600 452)" filter="url(#tm)"/></g><g clip-path="url(#sec15)"><rect x="536" y="-38" width="129" height="500" fill="#92886a" transform="rotate(229.5 600 452)" filter="url(#tm)"/></g><g clip-path="url(#sec16)"><rect x="536" y="-38" width="129" height="500" fill="#92886a" transform="rotate(238.5 600 452)" filter="url(#tm)"/></g><g clip-path="url(#sec17)"><rect x="536" y="-38" width="129" height="500" fill="#92876a" transform="rotate(247.5 600 452)" filter="url(#tm)"/></g><g clip-path="url(#sec18)"><rect x="536" y="-38" width="129" height="500" fill="#918769" transform="rotate(256.5 600 452)" filter="url(#tm)"/></g><g clip-path="url(#sec19)"><rect x="536" y="-38" width="129" height="500" fill="#918769" transform="rotate(265.5 600 452)" filter="url(#tm)"/></g><g clip-path="url(#sec20)"><rect x="536" y="-38" width="129" height="500" fill="#92876a" transform="rotate(274.5 600 452)" filter="url(#tm)"/></g><g clip-path="url(#sec21)"><rect x="536" y="-38" width="129" height="500" fill="#93896b" transform="rotate(283.5 600 452)" filter="url(#tm)"/></g><g clip-path="url(#sec22)"><rect x="536" y="-38" width="129" height="500" fill="#958b6c" transform="rotate(292.5 600 452)" filter="url(#tm)"/></g><g clip-path="url(#sec23)"><rect x="536" y="-38" width="129" height="500" fill="#978c6d" transform="rotate(301.5 600 452)" filter="url(#tm)"/></g><g clip-path="url(#sec24)"><rect x="536" y="-38" width="129" height="500" fill="#998e6e" transform="rotate(310.5 600 452)" filter="url(#tm)"/></g><g clip-path="url(#sec25)"><rect x="536" y="-38" width="129" height="500" fill="#9b9070" transform="rotate(319.5 600 452)" filter="url(#tm)"/></g><g clip-path="url(#sec26)"><rect x="536" y="-38" width="129" height="500" fill="#9f9373" transform="rotate(328.5 600 452)" filter="url(#tm)"/></g><g clip-path="url(#sec27)"><rect x="536" y="-38" width="129" height="500" fill="#a29775" transform="rotate(337.5 600 452)" filter="url(#tm)"/></g><g clip-path="url(#sec28)"><rect x="536" y="-38" width="129" height="500" fill="#a59a78" transform="rotate(346.5 600 452)" filter="url(#tm)"/></g><g clip-path="url(#sec29)"><rect x="536" y="-38" width="129" height="500" fill="#a99d7a" transform="rotate(355.5 600 452)" filter="url(#tm)"/></g><g clip-path="url(#sec30)"><rect x="536" y="-38" width="129" height="500" fill="#ab9f7c" transform="rotate(364.5 600 452)" filter="url(#tm)"/></g><g clip-path="url(#sec31)"><rect x="536" y="-38" width="129" height="500" fill="#ab9f7c" transform="rotate(373.5 600 452)" filter="url(#tm)"/></g><g clip-path="url(#sec32)"><rect x="536" y="-38" width="129" height="500" fill="#ab9f7c" transform="rotate(382.5 600 452)" filter="url(#tm)"/></g><g clip-path="url(#sec33)"><rect x="536" y="-38" width="129" height="500" fill="#ab9f7c" transform="rotate(391.5 600 452)" filter="url(#tm)"/></g><g clip-path="url(#sec34)"><rect x="536" y="-38" width="129" height="500" fill="#ab9f7c" transform="rotate(400.5 600 452)" filter="url(#tm)"/></g><g clip-path="url(#sec35)"><rect x="536" y="-38" width="129" height="500" fill="#ab9f7c" transform="rotate(409.5 600 452)" filter="url(#tm)"/></g><g clip-path="url(#sec36)"><rect x="536" y="-38" width="129" height="500" fill="#ab9f7c" transform="rotate(418.5 600 452)" filter="url(#tm)"/></g><g clip-path="url(#sec37)"><rect x="536" y="-38" width="129" height="500" fill="#ab9f7c" transform="rotate(427.5 600 452)" filter="url(#tm)"/></g><g clip-path="url(#sec38)"><rect x="536" y="-38" width="129" height="500" fill="#ab9f7c" transform="rotate(436.5 600 452)" filter="url(#tm)"/></g><g clip-path="url(#sec39)"><rect x="536" y="-38" width="129" height="500" fill="#ab9f7c" transform="rotate(445.5 600 452)" filter="url(#tm)"/></g></g>
<g stroke-width="2.8" stroke-linecap="round" fill="none"><path d="M549 69L547 51M557 80L553 48M566 82L563 49M1020 538L1037 541M1011 542L1040 548M1007 547L1041 555M1023 556L1040 561M1019 561L1032 565M1009 571L1034 578M1003 576L1028 583M1000 578L1032 588M1013 585L1028 590M998 583L1031 594M1004 591L1024 599M1006 599L1025 606M995 601L1022 611M1001 613L1025 623M999 619L1020 628M996 621L1019 631M989 621L1020 635M1000 629L1018 637M987 627L1015 640M994 640L1018 651M996 644L1017 654M985 652L1006 663M976 651L1009 668M983 661L1009 675M974 666L999 680M968 666L997 683M969 677L992 691M960 692L985 708M516 77L510 52M519 78L515 57M532 71L530 57M539 76L536 55M541 70L537 47M545 75L542 56" stroke="#a79b79"/><path d="M553 73L550 51M560 78L557 51M562 76L559 47M567 65L566 52M1011 545L1039 551M1021 559L1038 563M1004 564L1034 572M1006 567L1030 574M1002 572L1034 582M1012 591L1028 596M1002 594L1028 603M1001 600L1023 608M1005 608L1027 617M996 608L1025 619M998 615L1019 624M989 634L1012 645M994 646L1016 658M987 646L1010 658M979 646L1011 662M985 666L1006 677M979 679L995 689M961 675L997 697M960 678L992 698M971 688L989 699M967 689L990 704M962 689L989 707M510 75L506 58M513 77L509 59M523 80L516 51M529 82L524 58M530 75L527 57M535 70L532 52M547 70L544 50" stroke="#b6ae89"/><path d="M571 79L569 53M580 82L579 53M592 82L591 52M595 84L594 52M612 66L612 53M614 78L615 53M616 86L618 51M623 72L624 55M634 80L636 56M637 73L639 53M640 77L642 56M645 78L648 57M650 84L653 61M654 77L657 58M658 88L663 55M664 89L669 58M674 93L681 62M680 77L683 67M680 93L687 61M689 81L693 63M690 97L699 63M696 99L703 71M705 87L710 68M704 99L712 74M718 85L721 74M717 104L727 75M720 106L730 75M727 93L733 77M726 105L735 81M739 95L745 80M736 109L749 78M737 114L749 86M744 106L754 82M745 110L755 86M745 117L759 86M750 114L762 87M758 122L773 92M764 116L774 96M770 111L779 92M771 115L779 100M790 117L796 107M789 131L800 111M791 132L804 111M791 138L804 117M792 142L810 113M804 139L816 121M813 157L833 129M824 156L836 139M830 152L840 139M832 154L846 137M830 161L846 141M836 167L858 140M841 165L856 147M841 170L862 145M845 174L867 149M853 169L866 154M858 168L868 157M856 175L872 158M861 173L876 157M866 176L878 164M871 175L880 166M862 189L886 165M868 190L892 167M877 202L903 178M883 200L903 182M888 199L906 183M888 207L911 188M900 205L912 195M891 216L917 195M895 216L921 195M910 223L932 207M925 231L938 221M928 235L941 227M930 241L945 232M923 249L947 234M925 255L953 237M944 250L959 241M942 255L961 244M935 262L960 248M948 265L964 256M940 272L966 259M954 268L969 261M950 274L969 264M958 280L977 271M954 285L977 274M958 289L978 280M965 293L980 286M959 298L979 290M957 303L984 291M962 303L989 292M973 305L986 300M974 308L991 302M973 312L989 306M961 322L996 310M968 323L994 314M970 328L992 321M971 337L999 328M970 343L1005 333M979 353L1008 345M991 352L1005 349M979 364L1015 356M993 369L1014 365M1001 371L1020 367M989 379L1017 373M992 381L1017 376M995 383L1019 379M997 386L1019 382M1004 390L1024 387M1001 396L1027 393M1003 399L1029 396M997 403L1028 399M1002 413L1031 411M1012 415L1025 414M1013 418L1028 417M1009 421L1028 420M1011 424L1026 423M1009 427L1029 426M1006 430L1026 429M996 434L1026 432M1006 439L1032 438M1008 441L1028 441M1000 444L1032 444M1008 447L1032 447M1005 458L1035 458M1008 472L1038 473M1024 475L1039 476M1015 484L1041 486M1022 487L1036 488M1018 490L1039 492M1006 492L1042 495M1024 497L1039 498M1006 498L1037 501M1013 501L1042 505M1011 504L1034 507M1006 509L1037 513M1019 517L1034 519M1017 519L1040 523M1012 527L1041 533" stroke="#ab9f7c"/><path d="M574 78L573 53M577 72L576 52M583 73L582 47M586 76L585 48M597 71L597 51M600 79L600 48M603 67L603 51M628 85L630 53M632 70L633 58M642 80L645 52M648 75L651 56M657 78L660 57M661 86L666 56M667 87L672 57M671 94L678 58M683 94L690 61M689 91L696 64M693 96L701 68M701 90L706 70M712 84L715 74M719 90L726 69M735 98L742 78M758 102L764 89M758 110L766 93M763 105L769 93M771 122L782 101M772 127L785 101M780 118L789 100M791 120L799 107M802 132L812 116M795 147L814 118M807 139L815 127M808 144L819 127M809 147L823 128M819 152L831 136M831 164L848 143M852 161L862 150M873 181L886 169M883 184L895 172M884 188L895 177M896 197L910 185M899 216L920 200M901 219L922 202M901 222L923 205M903 225L925 208M907 232L934 213M919 227L935 216M919 238L941 223M940 249L951 242M942 261L958 252M942 265L961 254M957 277L975 268M958 286L980 276M967 305L989 296M974 324L994 317M967 332L998 322M978 338L998 332M989 341L1003 337M989 344L1006 339M990 356L1009 351M983 360L1006 355M983 369L1015 362M1010 386L1025 384M997 394L1025 390M993 406L1025 402M1004 407L1022 405M1001 452L1035 453M1004 466L1041 467M1007 477L1039 479M1008 480L1034 482M1020 526L1041 530M1015 534L1039 539" stroke="#bab28c"/><path d="M589 75L588 50M606 67L606 54M609 66L609 51M620 77L621 57M625 86L627 57M671 81L674 64M714 88L718 74M734 91L738 80M781 121L793 99M787 116L797 99M807 155L827 127M810 156L828 130M819 158L835 135M832 168L855 139M860 178L875 163M874 188L894 169M883 192L896 181M901 200L914 189M916 222L929 213M921 229L934 220M925 241L943 229M928 249L950 236M953 275L971 267M951 296L981 282M960 320L991 308M981 331L995 326M980 349L1009 342M995 363L1012 359M987 376L1021 370M1003 410L1024 408M1007 436L1026 435M1020 450L1029 450M1018 455L1039 455M1018 461L1035 461M1018 464L1041 464M1022 469L1036 470M1023 508L1042 511M1018 514L1036 516M1016 522L1034 525M1005 529L1036 535" stroke="#776f55"/><path d="M1006 538L1040 545M1016 552L1040 558M1017 564L1036 569M995 634L1017 644M988 660L1003 669M975 663L1001 678M982 677L998 687M526 83L521 57" stroke="#746c53"/><path d="M953 690L983 711M960 705L979 719M954 708L972 721M945 719L964 734M936 716L963 738M930 744L949 761M927 746L944 761M911 738L940 766M909 740L940 769M914 749L937 770M909 752L933 775M902 753L923 774M849 763L875 795M855 775L873 798M454 92L445 70M478 80L472 64M483 75L478 59M494 82L486 56M494 71L489 54M503 83L495 54M506 83L498 53" stroke="#b2aa86"/><path d="M962 700L985 716M955 712L974 726M947 718L970 735M935 719L961 739M942 728L960 742M932 724L960 747M936 731L954 746M924 735L947 756M912 751L936 773M903 750L928 774M894 753L921 780M880 750L910 782M875 768L896 793M868 764L891 792M865 765L887 791M841 766L871 804M453 83L447 67M461 95L449 66M470 86L461 61M490 87L482 61" stroke="#726a51"/><path d="M953 697L980 716M956 706L979 722M949 712L972 729M947 713L972 733M922 723L955 750M929 733L951 751M932 739L951 755M918 742L943 764M902 757L922 777M892 754L916 780M886 753L914 782M885 760L906 782M881 759L906 786M881 763L902 787M881 767L897 785M873 763L893 785M863 767L886 795M861 769L885 798M863 776L878 794M844 765L873 802M459 82L454 68M467 95L456 65M470 94L460 67M472 83L466 64M479 93L468 61M482 82L474 58M490 78L484 58M497 71L494 61M508 80L502 58" stroke="#a49877"/><path d="M848 780L865 802M835 775L857 806M827 774L854 812M832 785L851 813M816 786L835 815M806 786L825 817M799 780L824 821M802 796L815 817M776 794L794 829M772 799L787 829M767 796L786 835M753 798L769 833M753 804L766 834M749 803L763 834M749 810L761 839M401 109L390 90M412 98L404 84M427 109L415 85M429 107L417 82M433 108L419 80M429 94L422 80M435 99L426 80M442 101L429 73M445 100L433 73" stroke="#aea783"/><path d="M839 771L864 805M834 770L862 808M828 770L854 807M822 775L847 812M814 778L838 815M810 782L833 818M814 794L829 818M799 796L814 821M796 796L812 824M790 791L808 824M785 787L807 828M786 802L799 825M779 795L795 825M770 788L792 832M756 798L774 838M402 117L388 93M406 111L393 89M406 107L394 86M410 107L400 89M415 99L408 85M424 109L409 81M447 98L438 78M445 88L438 70M448 86L442 71" stroke="#a09574"/><path d="M824 783L842 809M818 779L839 812M803 791L822 823M789 802L801 824M763 792L782 832M761 796L777 830M761 803L775 831M397 118L385 99M395 111L386 95M412 106L401 85M434 91L427 75" stroke="#6f684f"/><path d="M744 804L758 838M743 809L754 838M730 800L746 842M727 798L741 838M714 803L726 840M712 808L725 848M707 800L722 847M707 810L719 849M699 802L713 849M700 814L709 847M695 816L702 844M692 819L700 848M689 817L696 847M686 816L693 846M681 806L692 853M680 816L688 851M675 804L685 850M672 817L678 847M670 819L676 853M665 806L673 852M660 813L668 856M659 821L664 854M655 812L662 857M649 810L655 854M343 151L325 130M351 146L333 124M352 133L341 120M351 128L342 116M355 128L343 113M360 130L348 114M378 131L361 106M372 117L365 106M382 126L368 106M384 119L372 101M386 112L377 97M396 123L378 94" stroke="#9d9272"/><path d="M738 805L751 838M738 813L748 837M725 801L740 845M724 808L736 842M697 815L707 851M675 818L682 850M339 137L329 125M378 115L372 106" stroke="#6d664e"/><path d="M721 807L734 846M715 799L731 846M704 807L715 846M662 808L670 854M654 824L658 854M339 141L327 128M352 143L334 121M355 143L337 120M365 132L353 115M371 135L353 110M375 135L356 109M372 126L360 110M385 115L375 101" stroke="#aba380"/><path d="M647 818L652 851M639 815L643 855M633 810L637 858M631 820L634 860M627 810L631 852M619 810L622 856M617 812L619 854M614 821L616 854M612 825L613 856M606 806L607 857M595 816L595 853M592 819L592 856M590 818L589 851M587 810L585 855M584 809L582 856M579 804L576 852M556 817L553 846M553 817L549 849M547 806L540 851M543 812L537 848M540 810L534 850M536 819L531 844M533 819L527 851M530 815L524 848M264 196L251 186M279 204L258 187M272 191L257 178M276 190L263 179M281 186L267 175M289 189L266 170M307 179L281 155M310 178L290 159M310 174L288 153M315 175L293 154M317 173L291 147M319 162L300 143M326 166L305 144M324 159L308 143M328 156L310 136M332 156L313 135" stroke="#998f6f"/><path d="M644 815L649 851M622 813L625 854M601 825L601 852M574 804L570 851M571 807L567 854M272 212L249 196M264 203L246 190M301 185L274 161M312 160L296 143" stroke="#6b634c"/><path d="M641 812L646 852M636 812L640 858M626 824L628 855M609 807L610 858M603 825L604 857M598 808L598 855M582 805L580 851M576 811L573 857M568 808L565 849M566 807L561 853M562 813L558 851M560 805L555 849M552 809L547 847M548 815L543 852M264 199L252 190M283 203L255 181M289 196L261 174M283 180L270 169M293 185L272 167M292 180L277 167M301 181L278 160M294 171L285 162M316 167L295 147M319 150L309 140M333 152L318 136M335 150L320 133M331 141L324 133" stroke="#a7a07e"/><path d="M529 808L521 845M525 813L519 841M523 806L515 846M517 807L509 844M516 802L506 842M511 808L502 846M507 800L497 838M500 805L489 844M495 803L485 835M491 805L483 833M488 805L478 837M487 790L474 829M480 787L465 827M468 794L455 829M469 785L452 826M465 785L450 824M457 791L446 817M453 793L442 819M454 783L440 815M454 778L436 817M447 785L434 814M445 777L426 815M434 773L415 809M433 767L413 807M421 779L407 803M420 773L406 800M412 776L399 799M411 772L397 795M408 766L392 792M409 759L387 794M204 321L176 312M204 318L177 309M212 315L181 303M198 303L186 299M206 303L184 294M205 286L189 279M220 273L198 263M213 267L204 263M231 273L205 260M235 265L204 249M223 252L208 244M240 258L215 245M240 254L215 241M237 246L216 235M229 238L217 231M242 242L216 227M248 242L218 224M240 234L224 224M242 227L226 218M249 214L237 206M257 209L240 196" stroke="#968b6d"/><path d="M519 814L512 845M506 795L493 843M497 805L487 838M487 798L477 830M479 797L466 832M473 795L461 829M459 793L446 824M441 772L420 814M399 769L383 795M393 763L376 789M208 316L179 306M197 306L181 300M209 297L189 290M210 292L193 285M220 290L190 276M214 283L196 276M211 279L194 271M222 281L196 269M214 274L200 267M217 263L201 254M218 260L208 255M232 260L211 249M232 247L217 239M248 235L226 221M243 224L228 215M253 227L226 210M263 220L237 202M266 212L246 197" stroke="#a39c7b"/><path d="M507 813L500 840M482 798L469 833M471 794L459 826M449 774L431 812M444 773L426 810M438 770L419 808M424 779L411 803M420 767L401 802M412 766L391 800M405 755L381 792M401 756L378 792M217 304L185 292M208 294L188 286M245 219L230 209M246 216L233 207M260 215L237 198" stroke="#68614a"/><path d="M393 758L376 784M396 749L372 784M391 747L370 777M386 744L365 773M378 751L360 775M357 741L343 757M354 740L341 755M353 737L334 759M357 728L333 755M349 730L331 749M336 726L318 745M346 712L317 741M341 709L313 737M333 710L308 733M331 700L301 727M326 700L299 725M320 699L293 723M311 692L283 715M295 687L274 703M296 676L265 698M283 681L266 694M293 671L259 695M277 668L255 683M270 669L255 679M271 665L253 677M274 656L246 674M270 649L240 667M257 650L234 663M254 645L234 656M256 637L232 650M259 633L230 648M255 632L225 648M243 635L222 646M252 627L221 643M245 627L221 639M234 622L220 629M234 616L211 626M237 611L208 624M241 603L208 617M231 604L210 613M233 600L209 610M229 598L203 609M227 596L204 605M215 595L203 599M231 586L203 596M230 580L198 591M212 580L199 584M210 578L192 584M224 567L195 576M207 558L192 562M213 547L185 554M198 544L183 548M208 539L179 545M206 536L178 542M201 528L180 532M207 521L176 526M200 519L179 523M206 509L178 513M189 508L176 510M200 498L173 501M196 495L167 499M193 490L169 492M193 484L165 486M192 481L161 483M184 476L167 477M182 473L166 474M188 467L165 468M193 464L166 465M181 453L160 453M192 450L166 450M185 447L164 447M189 433L164 431M176 426L160 425M188 424L160 422M194 419L158 416M192 413L158 409M193 398L162 394M183 376L165 373M187 374L169 371M192 369L168 364M201 365L168 358M186 353L175 350M189 351L172 346M198 335L177 329M194 331L176 325M201 330L176 322M206 328L177 319" stroke="#93886a"/><path d="M386 759L371 780M369 748L355 767M372 736L346 768M357 724L332 752M349 720L323 748M316 699L292 719M307 703L288 718M301 697L279 714M302 692L282 708M296 693L274 710M280 673L255 690M287 665L254 687M280 656L248 677M260 658L246 667M249 619L216 634M238 617L212 629M241 606L208 620M208 575L190 581M215 559L184 567M200 556L186 560M207 530L182 535M188 502L168 505M178 470L161 471M181 458L166 459M192 455L160 456M185 441L160 440M176 435L162 434M183 415L162 413M193 381L168 377M182 370L167 367M204 342L172 334" stroke="#665f49"/><path d="M386 749L367 775M383 740L359 772M373 748L358 768M370 743L353 765M373 731L344 766M370 729L343 762M352 722L325 751M346 719L320 748M333 721L315 740M337 709L308 738M335 703L305 732M331 704L305 728M313 709L299 721M309 697L284 718M295 690L278 704M301 679L274 699M294 681L267 701M286 673L257 692M276 652L244 672M256 654L240 664M264 643L238 657M257 640L234 653M246 623L217 637M221 595L201 603M221 586L198 595M220 581L196 589M220 566L193 574M208 566L189 572M214 562L190 568M211 550L182 558M203 546L184 551M204 534L180 538M200 525L175 530M195 517L173 520M197 513L173 517M203 504L174 507M199 492L171 495M182 488L170 489M186 479L166 480M189 461L161 462M185 444L159 443M181 438L167 437M190 430L164 428M186 421L165 419M188 410L161 407M183 406L164 404M179 403L163 401M193 401L160 397M178 393L160 391M192 392L164 388M197 390L160 385M190 386L168 383M185 383L167 380M200 368L170 361M193 360L169 355M184 355L169 352M187 347L172 343M200 347L177 341M192 342L176 338M200 338L174 331M204 325L181 317" stroke="#9f9978"/><path d="M551 55L550 51M554 52L553 48M560 51L559 47M567 56L566 52M1033 540L1037 541M1036 547L1040 548M1036 557L1040 558M1036 560L1040 561M1034 562L1038 563M1032 568L1036 569M1030 580L1034 582M1027 593L1031 594M1021 618L1025 619M1015 629L1019 631M1012 638L1015 640M1006 666L1009 668M1000 667L1003 669M997 676L1001 678M995 678L999 680M994 681L997 683M994 695L997 697M987 702L990 704M986 705L989 707M522 61L521 57M530 61L530 57M545 54L544 50" stroke="#746c53" stroke-width="3.2"/><path d="M579 57L579 53M600 52L600 48M618 55L618 51M621 61L621 57M632 62L633 58M639 57L639 53M650 60L651 56M659 61L660 57M666 60L666 56M702 75L703 71M726 79L727 75M732 80L733 77M737 83L738 80M747 82L749 78M754 90L755 86M771 96L773 92M777 103L779 100M783 105L785 101M791 103L793 99M795 103L797 99M794 111L796 107M802 115L804 111M808 116L810 113M830 132L833 129M838 142L840 139M846 146L848 143M864 157L866 154M869 160L872 158M873 160L876 157M872 166L875 163M877 169L880 166M892 179L895 177M893 183L896 181M908 191L911 188M917 202L920 200M931 222L934 220M937 229L941 227M940 231L943 229M942 234L945 232M944 236L947 234M955 254L958 252M976 278L980 276M976 291L979 290M982 302L986 300M986 307L989 306M990 315L994 314M991 328L995 326M1002 340L1006 339M1004 346L1008 345M1005 352L1009 351M1002 356L1006 355M1016 367L1020 367M1016 382L1019 382M1021 384L1025 384M1021 390L1025 390M1027 411L1031 411M1022 423L1026 423M1025 426L1029 426M1028 438L1032 438M1028 444L1032 444M1031 452L1035 453M1037 464L1041 464M1037 467L1041 467M1034 473L1038 473M1037 486L1041 486M1038 495L1042 495M1038 504L1042 505M1030 525L1034 525M1037 529L1041 530M1032 534L1036 535" stroke="#776f55" stroke-width="3.2"/><path d="M977 714L980 716M970 724L974 726M961 732L964 734M952 748L955 750M946 758L949 761M934 768L937 770M919 774L922 777M912 779L914 782M907 779L910 782M903 783L906 786M895 782L897 785M893 790L896 793M870 799L873 802M446 74L445 70M455 72L454 68M463 65L461 61M474 68L472 64M479 63L478 59M488 60L486 56M490 58L489 54M495 65L494 61M499 56L498 53" stroke="#726a51" stroke-width="3.2"/><path d="M852 804L854 807M836 811L838 815M833 812L835 815M830 814L833 818M810 820L812 824M792 826L794 829M790 828L792 832M780 829L782 832M767 829L769 833M760 835L761 839M396 89L394 86M403 89L401 85M410 88L408 85M421 84L419 80M439 81L438 78" stroke="#6f684f" stroke-width="3.2"/><path d="M756 835L758 838M745 838L746 842M706 848L707 851M681 846L682 850M675 849L676 853M670 850L670 854M327 133L325 130M330 131L327 128M332 128L329 125M339 123L337 120M351 117L348 114M355 119L353 115M355 113L353 110M358 112L356 109M378 104L375 101M381 97L378 94" stroke="#6d664e" stroke-width="3.2"/><path d="M640 854L640 858M622 852L622 856M601 848L601 852M583 852L582 856M565 845L565 849M562 849L561 853M559 847L558 851M550 845L549 849M547 843L547 847M543 848L543 852M540 847L540 851M534 846L534 850M255 193L252 190M261 190L258 187M269 172L266 170M284 158L281 155M293 162L290 159M311 146L308 143M321 139L318 136M323 136L320 133M326 136L324 133" stroke="#6b634c" stroke-width="3.2"/><path d="M484 829L483 833M468 829L466 832M460 822L459 826M454 822L452 826M448 820L446 824M436 810L434 814M428 811L426 815M427 806L426 810M403 798L401 802M401 795L399 799M394 789L392 792M389 791L387 794M383 789L381 792M183 308L179 306M189 300L186 299M187 296L184 294M191 287L188 286M192 281L189 279M193 278L190 276M197 273L194 271M200 271L196 269M203 269L200 267M202 265L198 263M205 256L201 254M215 251L211 249M220 233L217 231M220 229L216 227M228 226L224 224M229 212L226 210M240 208L237 206M240 204L237 202M240 201L237 198M243 199L240 196" stroke="#68614a" stroke-width="3.2"/><path d="M373 777L371 780M370 772L367 775M368 770L365 773M360 765L358 768M357 764L355 767M348 765L346 768M344 752L341 755M335 749L332 752M334 746L331 749M328 748L325 751M326 746L323 748M311 730L308 733M304 725L301 727M295 716L292 719M291 716L288 718M281 701L278 704M270 698L267 701M257 685L254 687M258 681L255 683M249 672L246 674M249 665L246 667M237 661L234 663M242 655L238 657M238 654L234 656M233 646L230 648M228 646L225 648M220 636L217 637M215 625L211 626M205 601L201 603M203 583L199 584M199 575L195 576M186 557L182 558M188 550L184 551M182 541L178 542M186 534L182 535M179 529L175 530M177 520L173 520M171 476L167 477M170 474L166 474M169 468L165 468M164 453L160 453M164 440L160 440M165 407L161 407M167 401L163 401M164 385L160 385M172 377L168 377M171 368L167 367M180 339L176 338M178 332L174 331M179 323L176 322M180 320L177 319" stroke="#665f49" stroke-width="3.2"/></g>
<path d="M438.0,224.0 C443.3,215.3 445.0,217.7 452.0,216.0 C459.0,214.3 472.0,213.3 480.0,214.0 C488.0,214.7 494.3,216.8 500.0,220.0 C505.7,223.2 508.7,229.2 514.0,233.0 C519.3,236.8 524.5,241.2 532.0,243.0 C539.5,244.8 541.0,242.8 559.0,244.0 C577.0,245.2 616.5,245.7 640.0,250.0 C663.5,254.3 682.7,263.0 700.0,270.0 C717.3,277.0 733.8,285.7 744.0,292.0 C754.2,298.3 755.7,306.7 761.0,308.0 C766.3,309.3 769.5,302.0 776.0,300.0 C782.5,298.0 789.2,296.7 800.0,296.0 C810.8,295.3 831.7,294.0 841.0,296.0 C850.3,298.0 852.5,301.5 856.0,308.0 C859.5,314.5 860.8,316.3 862.0,335.0 C863.2,353.7 862.8,392.5 863.0,420.0 C863.2,447.5 863.2,476.7 863.0,500.0 C862.8,523.3 863.3,540.5 862.0,560.0 C860.7,579.5 858.3,599.0 855.0,617.0 C851.7,635.0 847.7,652.2 842.0,668.0 C836.3,683.8 831.3,699.3 821.0,712.0 C810.7,724.7 795.8,735.5 780.0,744.0 C764.2,752.5 745.5,760.3 726.0,763.0 C706.5,765.7 689.2,763.2 663.0,760.0 C636.8,756.8 600.5,750.3 569.0,744.0 C537.5,737.7 500.5,730.2 474.0,722.0 C447.5,713.8 425.7,702.5 410.0,695.0 C394.3,687.5 388.5,683.0 380.0,677.0 C371.5,671.0 367.3,667.7 359.0,659.0 C350.7,650.3 337.8,636.5 330.0,625.0 C322.2,613.5 316.5,603.3 312.0,590.0 C307.5,576.7 304.5,560.0 303.0,545.0 C301.5,530.0 301.8,514.2 303.0,500.0 C304.2,485.8 306.8,473.3 310.0,460.0 C313.2,446.7 316.2,433.3 322.0,420.0 C327.8,406.7 337.0,393.3 345.0,380.0 C353.0,366.7 361.8,353.0 370.0,340.0 C378.2,327.0 385.7,314.0 394.0,302.0 C402.3,290.0 412.7,281.0 420.0,268.0 C427.3,255.0 432.7,232.7 438.0,224.0Z" fill="#e6ebbe" filter="url(#tf)"/>
<g clip-path="url(#sp)"><rect x="380" y="180" width="560" height="460" fill="#7b7e75" transform="rotate(-28 650 410)" filter="url(#ts)"/></g>
<g clip-path="url(#fc)"><ellipse cx="379" cy="590" rx="76" ry="81" fill="#d8a89e" transform="rotate(14 379 590)" filter="url(#tc)"/><ellipse cx="743" cy="680" rx="91" ry="79" fill="#d8a89e" transform="rotate(10 743 680)" filter="url(#tc)"/></g>
<path d="M531,529 C548,543 580,553 612,556 C618,557 616,566 614,574 C610,590 604,604 597,613 C582,621 560,620 546,610 C534,600 531,585 531,529 Z" fill="#353632"/>
<circle cx="450" cy="548" r="28" fill="#353632"/>
<ellipse cx="672" cy="615.5" rx="25.5" ry="23.5" fill="#353632"/>
<path d="M435.3,269.9 L436.0,269.2 L436.5,268.3 L437.1,267.2 L437.6,266.0 L438.2,264.7 L438.8,263.4 L439.4,262.0 L440.1,260.7 L440.7,259.4 L441.4,258.3 L442.0,257.4 L442.7,256.6 L443.3,255.8 L444.1,255.0 L444.9,254.2 L445.8,253.5 L446.6,252.7 L447.5,252.0 L448.5,251.3 L449.4,250.7 L450.3,250.1 L451.3,249.5 L452.2,249.0 L453.2,248.5 L454.2,248.0 L455.2,247.6 L456.2,247.2 L457.3,246.8 L458.3,246.4 L459.4,246.1 L460.4,245.9 L461.4,245.7 L462.4,245.5 L463.4,245.4 L464.4,245.4 L465.2,245.4 L466.1,245.5 L467.1,245.8 L468.3,246.2 L469.7,246.7 L471.1,247.3 L472.5,248.0 L473.9,248.7 L475.2,249.4 L476.5,250.1 L477.7,250.6 L478.8,251.0 L479.7,251.2 L482.3,246.8 L481.8,246.1 L481.1,245.4 L480.1,244.6 L479.0,243.6 L477.8,242.6 L476.4,241.6 L475.0,240.6 L473.5,239.6 L471.9,238.7 L470.2,237.8 L468.5,237.1 L466.8,236.6 L465.1,236.3 L463.5,236.2 L461.9,236.1 L460.3,236.2 L458.8,236.4 L457.2,236.6 L455.7,237.0 L454.3,237.4 L452.8,237.8 L451.5,238.3 L450.1,238.9 L448.8,239.5 L447.5,240.2 L446.2,240.9 L444.9,241.7 L443.7,242.6 L442.5,243.5 L441.3,244.5 L440.2,245.5 L439.1,246.6 L438.1,247.8 L437.1,248.9 L436.2,250.1 L435.3,251.4 L434.5,252.9 L433.8,254.5 L433.1,256.1 L432.6,257.7 L432.1,259.3 L431.7,260.9 L431.3,262.4 L431.0,263.9 L430.8,265.2 L430.6,266.4 L430.6,267.3 L430.7,268.1Z" fill="#353632" stroke="#353632" stroke-width="2" stroke-linejoin="round"/>
<path d="M797.9,334.3 L798.8,334.4 L799.9,334.2 L801.1,333.8 L802.3,333.5 L803.7,333.0 L805.1,332.6 L806.4,332.2 L807.8,331.9 L809.1,331.6 L810.2,331.4 L811.2,331.4 L811.9,331.5 L812.7,331.6 L813.6,331.8 L814.6,332.1 L815.6,332.5 L816.5,332.9 L817.5,333.3 L818.5,333.8 L819.5,334.4 L820.4,334.9 L821.2,335.5 L822.0,336.1 L822.6,336.7 L823.2,337.3 L823.8,337.9 L824.4,338.6 L825.0,339.4 L825.5,340.3 L826.0,341.2 L826.6,342.1 L827.0,343.1 L827.5,344.1 L827.9,345.1 L828.3,346.1 L828.7,347.0 L828.9,347.9 L829.2,348.9 L829.3,350.1 L829.5,351.4 L829.6,352.8 L829.7,354.1 L829.7,355.5 L829.8,356.8 L829.9,358.0 L830.0,359.1 L830.2,360.1 L830.5,360.9 L835.5,361.1 L835.9,360.4 L836.2,359.6 L836.5,358.5 L836.7,357.3 L837.0,355.9 L837.2,354.5 L837.4,353.0 L837.6,351.4 L837.6,349.8 L837.7,348.2 L837.6,346.5 L837.3,345.0 L837.1,343.6 L836.7,342.2 L836.3,340.8 L835.8,339.4 L835.3,338.1 L834.7,336.7 L834.0,335.4 L833.3,334.1 L832.4,332.8 L831.5,331.6 L830.5,330.4 L829.4,329.3 L828.2,328.3 L827.0,327.4 L825.7,326.6 L824.3,325.8 L822.9,325.1 L821.5,324.4 L820.0,323.9 L818.4,323.4 L816.9,323.0 L815.3,322.7 L813.7,322.6 L812.1,322.5 L810.3,322.7 L808.6,323.1 L806.9,323.6 L805.2,324.2 L803.7,324.9 L802.2,325.6 L800.8,326.4 L799.5,327.1 L798.4,327.8 L797.4,328.5 L796.6,329.1 L796.1,329.7Z" fill="#353632" stroke="#353632" stroke-width="2" stroke-linejoin="round"/>
<path d="M445,451 C449,437 460,430 472,430 C485,430 495,438 498,451 Z" fill="#353632"/>
<path d="M703.0,511.3 L704.0,511.3 L705.2,511.1 L706.4,510.7 L707.8,510.2 L709.2,509.7 L710.6,509.2 L712.1,508.7 L713.5,508.3 L714.9,508.0 L716.1,507.8 L717.1,507.8 L717.9,507.9 L718.9,508.0 L720.0,508.3 L721.1,508.6 L722.3,509.0 L723.6,509.5 L724.8,510.0 L726.0,510.6 L727.2,511.2 L728.3,511.9 L729.4,512.6 L730.5,513.4 L731.4,514.2 L732.4,515.1 L733.5,516.1 L734.5,517.2 L735.6,518.3 L736.6,519.5 L737.5,520.7 L738.4,522.0 L739.2,523.2 L739.9,524.4 L740.5,525.6 L740.9,526.6 L741.2,527.6 L741.3,528.5 L741.3,529.7 L741.2,531.2 L740.9,532.9 L740.4,534.8 L739.9,536.6 L739.4,538.5 L738.8,540.3 L738.3,542.0 L737.9,543.5 L737.6,545.0 L737.6,546.2 L742.4,547.8 L743.1,547.1 L743.8,546.0 L744.6,544.7 L745.6,543.1 L746.5,541.4 L747.4,539.5 L748.4,537.5 L749.2,535.4 L749.9,533.3 L750.5,531.0 L750.8,528.7 L750.8,526.4 L750.5,524.2 L750.0,522.2 L749.3,520.2 L748.4,518.3 L747.4,516.4 L746.3,514.7 L745.1,512.9 L743.9,511.3 L742.6,509.8 L741.3,508.4 L739.9,507.0 L738.6,505.8 L737.1,504.6 L735.6,503.6 L734.0,502.6 L732.3,501.7 L730.6,500.8 L728.8,500.1 L727.1,499.5 L725.3,499.0 L723.5,498.6 L721.7,498.3 L719.9,498.2 L718.1,498.1 L716.1,498.4 L714.1,498.8 L712.2,499.4 L710.5,500.2 L708.8,501.0 L707.2,501.9 L705.8,502.8 L704.4,503.7 L703.3,504.5 L702.3,505.3 L701.5,506.0 L701.0,506.7Z" fill="#353632" stroke="#353632" stroke-width="2" stroke-linejoin="round"/>
<path d="M503.1,618.1 L503.0,619.0 L503.1,620.2 L503.2,621.7 L503.4,623.4 L503.7,625.2 L504.0,627.2 L504.4,629.3 L504.9,631.4 L505.5,633.5 L506.2,635.5 L507.2,637.5 L508.3,639.4 L509.5,641.0 L510.8,642.4 L512.2,643.7 L513.6,644.9 L515.1,646.1 L516.7,647.0 L518.3,647.9 L520.0,648.7 L521.7,649.4 L523.5,650.0 L525.2,650.4 L527.1,650.7 L529.2,650.9 L531.3,650.8 L533.3,650.6 L535.3,650.2 L537.3,649.7 L539.1,649.2 L540.9,648.6 L542.5,648.0 L543.9,647.4 L545.2,646.9 L546.1,646.4 L546.8,645.9 L545.2,638.1 L544.1,637.9 L542.8,638.0 L541.4,638.2 L539.9,638.4 L538.4,638.7 L536.7,639.0 L535.1,639.2 L533.6,639.4 L532.1,639.5 L530.8,639.5 L529.8,639.4 L528.9,639.3 L528.0,639.0 L527.0,638.7 L525.9,638.3 L524.9,637.8 L523.8,637.3 L522.8,636.7 L521.8,636.1 L520.8,635.4 L519.9,634.7 L519.1,634.0 L518.3,633.3 L517.7,632.6 L517.2,631.9 L516.6,630.9 L515.9,629.6 L515.3,628.0 L514.7,626.4 L514.1,624.7 L513.6,622.9 L513.1,621.2 L512.5,619.6 L512.0,618.2 L511.5,616.9 L510.9,615.9Z" fill="#353632" stroke="#353632" stroke-width="2" stroke-linejoin="round"/>
<path d="M545.0,642.0 C546.0,637.8 550.0,621.2 551.0,617.0" fill="none" stroke="#353632" stroke-width="8" stroke-linecap="round" stroke-linejoin="round"/>
<path d="M542.3,644.6 L542.2,645.3 L542.3,646.1 L542.5,647.1 L542.7,648.3 L543.1,649.6 L543.5,651.1 L543.9,652.5 L544.4,654.0 L545.1,655.5 L545.8,657.0 L546.6,658.4 L547.6,659.8 L548.4,660.8 L549.3,661.7 L550.2,662.7 L551.2,663.7 L552.4,664.7 L553.6,665.6 L555.0,666.4 L556.6,667.1 L558.3,667.7 L560.2,668.0 L562.3,668.0 L564.4,667.6 L566.5,666.8 L568.4,665.7 L570.1,664.5 L571.7,663.2 L573.2,661.7 L574.7,660.3 L576.1,658.8 L577.4,657.4 L578.5,656.0 L579.5,654.8 L580.2,653.9 L580.6,653.0 L575.4,647.0 L574.3,647.4 L573.2,648.2 L571.9,649.1 L570.5,650.2 L569.1,651.3 L567.7,652.5 L566.2,653.6 L564.9,654.6 L563.6,655.5 L562.5,656.1 L561.8,656.4 L561.6,656.4 L561.6,656.3 L561.5,656.2 L561.4,656.2 L561.1,656.1 L560.7,655.9 L560.2,655.6 L559.7,655.2 L559.1,654.7 L558.4,654.1 L557.7,653.5 L557.0,652.8 L556.4,652.2 L556.0,651.8 L555.5,651.2 L555.0,650.4 L554.4,649.4 L553.8,648.3 L553.2,647.2 L552.6,646.1 L552.0,644.9 L551.5,643.9 L550.9,642.9 L550.3,642.0 L549.7,641.4Z" fill="#353632" stroke="#353632" stroke-width="2" stroke-linejoin="round"/>
</svg>
</body></html>
